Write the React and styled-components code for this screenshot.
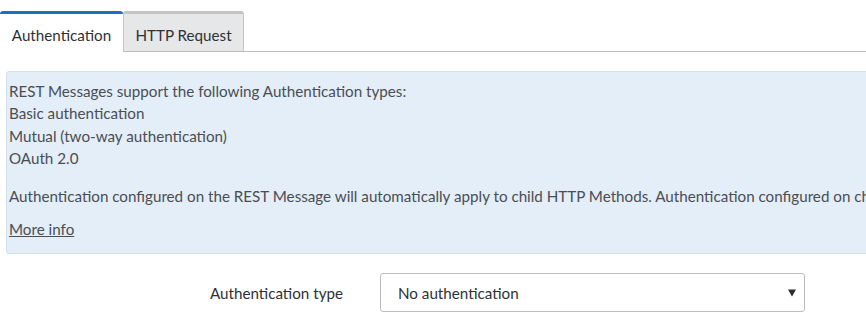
import React, { useState } from 'react';
import styled, { createGlobalStyle } from 'styled-components';

const GlobalStyle = createGlobalStyle`
  html, body {
    margin: 0;
    padding: 0;
    background: #fff;
    overflow: hidden;
  }
  body {
    font-family: Lato, "Open Sans", "Liberation Sans", sans-serif;
    color: #4a4d52;
  }
`;

const Page = styled.div`
  width: 866px;
  height: 334px;
  padding-top: 11px;
  box-sizing: border-box;
  overflow: hidden;
`;

const TabBar = styled.div`
  display: flex;
  align-items: flex-end;
  border-bottom: 1px solid #bdbdbd;
  height: 40px;
`;

const Tab = styled.div`
  box-sizing: border-box;
  display: flex;
  align-items: center;
  justify-content: center;
  padding-top: 4px;
  font-size: 15.2px;
  color: #2e3135;
  cursor: pointer;
  border-top: 3px solid ${p => (p.$active ? '#1f6ec1' : '#c4c4c4')};
  background: ${p => (p.$active ? '#fff' : '#e6e7e9')};
  border-right: ${p => (p.$active ? 'none' : '1px solid #c4c4c4')};
  border-left: ${p => (p.$active ? 'none' : '1px solid #c4c4c4')};
  margin-bottom: ${p => (p.$active ? '-1px' : '0')};
  height: ${p => (p.$active ? '41px' : '40px')};
  border-radius: 3px 3px 0 0;
  width: ${p => p.$width}px;
`;

const InfoBox = styled.div`
  margin: 19px 0 0 6px;
  width: 880px;
  height: 183px;
  box-sizing: border-box;
  background: #e4eef9;
  border: 1px solid #d3e1ef;
  border-radius: 3px;
  padding: 8px 0 0 2px;
  font-size: 15.2px;
  color: #4a4d52;
  white-space: nowrap;
`;

const Line = styled.div`
  line-height: 22.4px;
`;

const Paragraph = styled.div`
  margin-top: ${p => p.$gap || 0}px;
  line-height: 22px;
`;

const MoreLink = styled.a`
  color: #4a4d52;
  text-decoration: underline;
  cursor: pointer;
`;

const FormRow = styled.div`
  display: grid;
  grid-template-columns: 343px 425px;
  column-gap: 37px;
  align-items: center;
  margin-top: 19px;
`;

const Label = styled.label`
  text-align: right;
  font-size: 15.2px;
  color: #2e3135;
`;

const SelectBox = styled.div`
  position: relative;
  height: 39px;
  box-sizing: border-box;
  border: 1px solid #bdbdbd;
  border-radius: 3px;
  background: #fff;
  display: flex;
  align-items: center;
  padding-left: 17px;
  font-size: 15.2px;
  color: #2e3135;
`;

const Caret = styled.span`
  position: absolute;
  right: 8px;
  top: 50%;
  transform: translateY(-50%);
  width: 0;
  height: 0;
  border-left: 4px solid transparent;
  border-right: 4px solid transparent;
  border-top: 7px solid #2a2c30;
`;

export default function App() {
  const [tab, setTab] = useState('auth');
  return (
    <>
      <GlobalStyle />
      <Page>
        <TabBar>
          <Tab $active={tab === 'auth'} $width={123} onClick={() => setTab('auth')}>
            Authentication
          </Tab>
          <Tab $active={tab === 'http'} $width={121} onClick={() => setTab('http')}>
            HTTP Request
          </Tab>
        </TabBar>
        <InfoBox>
          <Line>REST Messages support the following Authentication types:</Line>
          <Line>Basic authentication</Line>
          <Line>Mutual (two-way authentication)</Line>
          <Line>OAuth 2.0</Line>
          <Paragraph $gap={15}>
            Authentication configured on the REST Message will automatically apply to child HTTP Methods. Authentication configured on child HTTP Methods overrides the parent.
          </Paragraph>
          <Paragraph $gap={11}>
            <MoreLink>More info</MoreLink>
          </Paragraph>
        </InfoBox>
        <FormRow>
          <Label>Authentication type</Label>
          <SelectBox>
            No authentication
            <Caret />
          </SelectBox>
        </FormRow>
      </Page>
    </>
  );
}
